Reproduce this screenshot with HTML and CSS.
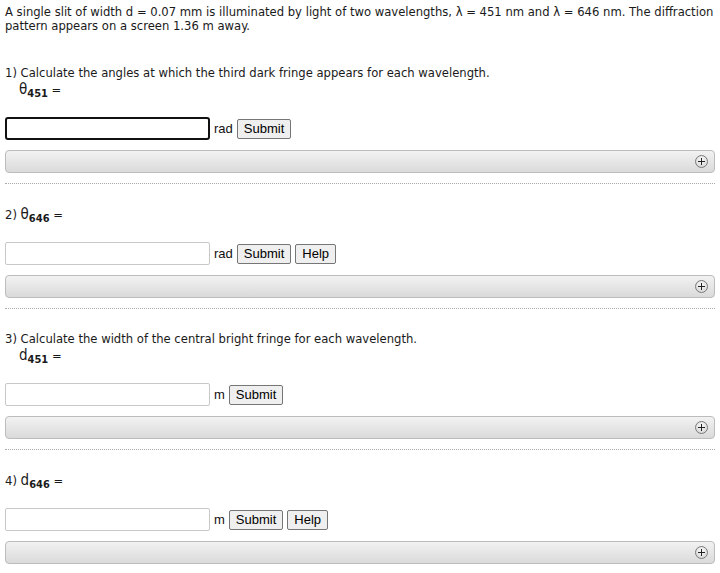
FILE: index.html
```html
<!DOCTYPE html>
<html>
<head>
<meta charset="utf-8">
<link rel="stylesheet" href="styles.css">
</head>
<body>
<p class="intro">A single slit of width d = 0.07 mm is illuminated by light of two wavelengths, λ = 451 nm and λ = 646 nm. The diffraction pattern appears on a screen 1.36 m away.</p>

<div class="q first">
  <div class="qtext">1) Calculate the angles at which the third dark fringe appears for each wavelength.</div>
  <div class="sub"><span class="sym">θ</span><sub>451</sub> =</div>
  <div class="row">
    <input class="ans focused" type="text">
    <span class="unit">rad</span>
    <button class="btn">Submit</button>
  </div>
  <div class="bar"><span class="plus"></span></div>
</div>

<div class="q">
  <div class="qtext">2) <span class="sym">θ</span><sub>646</sub> =</div>
  <div class="row">
    <input class="ans" type="text">
    <span class="unit">rad</span>
    <button class="btn">Submit</button>
    <button class="btn">Help</button>
  </div>
  <div class="bar"><span class="plus"></span></div>
</div>

<div class="q">
  <div class="qtext">3) Calculate the width of the central bright fringe for each wavelength.</div>
  <div class="sub"><span class="sym">d</span><sub>451</sub> =</div>
  <div class="row">
    <input class="ans" type="text">
    <span class="unit">m</span>
    <button class="btn">Submit</button>
  </div>
  <div class="bar"><span class="plus"></span></div>
</div>

<div class="q last">
  <div class="qtext">4) <span class="sym">d</span><sub>646</sub> =</div>
  <div class="row">
    <input class="ans" type="text">
    <span class="unit">m</span>
    <button class="btn">Submit</button>
    <button class="btn">Help</button>
  </div>
  <div class="bar"><span class="plus"></span></div>
</div>
</body>
</html>
```
FILE: styles.css
```css
html, body {
  margin: 0;
  padding: 0;
  background: #fff;
}
body {
  padding: 5px 5px 0 5px;
  font-family: "DejaVu Sans Condensed", "DejaVu Sans", sans-serif;
  font-size: 12.9px;
  line-height: 14px;
  color: #1a1a1a;
}
.intro {
  margin: 0;
}
.q {
  border-bottom: 1px dotted #aaa;
  padding: 23px 0 10px 0;
}
.q.first {
  padding-top: 33px;
}
.q.last {
  border-bottom: none;
}
.qtext {
  height: 14px;
  line-height: 14px;
}
.sub {
  padding-left: 14px;
  padding-top: 2px;
  height: 14px;
  line-height: 14px;
}
.sym {
  font-size: 15px;
  line-height: 14px;
}
sub {
  font-size: 11px;
  font-weight: bold;
  line-height: 0;
  vertical-align: -3px;
}
.row {
  display: flex;
  align-items: center;
  margin-top: 21px;
  height: 23px;
}
.ans {
  box-sizing: border-box;
  width: 205px;
  height: 23px;
  margin: 0;
  border: 1px solid #c8c8c8;
  border-radius: 2px;
  padding: 0 4px;
  outline: none;
}
.ans.focused {
  border: 2px solid #111;
  border-radius: 3px;
}
.unit {
  font-family: "Liberation Sans", Arial, sans-serif;
  font-size: 13px;
  margin: 0 4px;
  color: #111;
}
.btn {
  box-sizing: border-box;
  height: 20px;
  padding: 0 6px;
  margin: 0 4px 0 0;
  font-family: "Liberation Sans", Arial, sans-serif;
  font-size: 13px;
  color: #000;
  background: #efefef;
  border: 1px solid #767676;
  border-radius: 2px;
}
.bar {
  box-sizing: border-box;
  margin-top: 10px;
  height: 23px;
  border: 1px solid #bcbcbc;
  border-radius: 4px;
  background: linear-gradient(#f2f2f2, #dadada);
  display: flex;
  align-items: center;
  justify-content: flex-end;
  padding-right: 6px;
}
.plus {
  position: relative;
  box-sizing: border-box;
  width: 13px;
  height: 13px;
  border-radius: 50%;
  border: 1px solid #7a7a7a;
  background: radial-gradient(circle at 50% 35%, #fafafa, #cfcfcf);
}
.plus::before,
.plus::after {
  content: "";
  position: absolute;
  background: #222;
}
.plus::before {
  left: 2px;
  right: 2px;
  top: 5px;
  height: 1px;
}
.plus::after {
  top: 2px;
  bottom: 2px;
  left: 5px;
  width: 1px;
}
```
